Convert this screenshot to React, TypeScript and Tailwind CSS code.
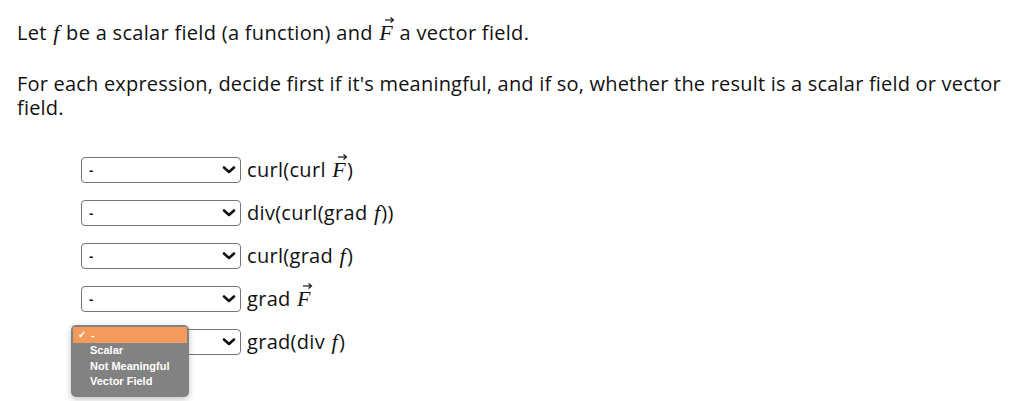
import React from "react";

const rows: { key: string; label: React.ReactNode; open?: boolean }[] = [
  { key: "a", label: <>curl(curl <Vec />)</> },
  { key: "b", label: <>div(curl(grad <Fn />))</> },
  { key: "c", label: <>curl(grad <Fn />)</> },
  { key: "d", label: <>grad <Vec /></> },
  { key: "e", label: <>grad(div <Fn />)</>, open: true },
];

function Fn() {
  return (
    <span className="italic text-[22px] px-[1px]" style={{ fontFamily: '"Liberation Serif", serif' }}>
      f
    </span>
  );
}

function Vec() {
  return (
    <span className="relative inline-block italic text-[22px] leading-none px-[1px]" style={{ fontFamily: '"Liberation Serif", serif' }}>
      F
      <svg className="absolute left-[6px] -top-[6px]" width="11" height="7" viewBox="0 0 11 7">
        <path d="M1 4 H9" stroke="#111" strokeWidth="1.2" />
        <path d="M6.5 1.5 L9.5 4 L6.5 6.5" stroke="#111" strokeWidth="1.2" fill="none" />
      </svg>
    </span>
  );
}

function FakeSelect({ open }: { open?: boolean }) {
  return (
    <div className="w-[160px] h-[26px] border border-[#767676] rounded-[4px] bg-white flex items-center justify-between pl-[7px] pr-[4px]">
      {/* the open menu covers the value, so it's left out */}
      <span className="text-[13px] font-bold leading-none" style={{ fontFamily: '"Liberation Sans", sans-serif' }}>
        {open ? "" : "-"}
      </span>
      <svg width="14" height="10" viewBox="0 0 14 10">
        <path d="M2 2.5 L7 7 L12 2.5" stroke="#111" strokeWidth="2.6" fill="none" strokeLinecap="round" strokeLinejoin="round" />
      </svg>
    </div>
  );
}

export default function App() {
  return (
    <div className="relative w-[1024px] h-[401px] bg-white text-[#111] overflow-hidden tracking-[0.3px]" style={{ fontFamily: '"Open Sans", sans-serif' }}>
      <div className="pl-[17px] pt-[21px] pr-[2px] text-[20px] leading-[24px]">
        <p>
          Let <Fn /> be a scalar field (a function) and <Vec /> a vector field.
        </p>
        <p className="mt-[27px] tracking-[0.2px]">
          For each expression, decide first if it's meaningful, and if so, whether the result is a scalar field or vector
          field.
        </p>
      </div>
      <div className="pl-[81px] pt-[37px] flex flex-col gap-[17px]">
        {rows.map((r) => (
          <div key={r.key} className="flex items-center gap-[6px] h-[26px]">
            <FakeSelect open={r.open} />
            <span className="text-[20px] leading-none">{r.label}</span>
          </div>
        ))}
      </div>
      <div
        className="absolute left-[71px] top-[325px] w-[118px] h-[72px] rounded-[5px] bg-[#828282] shadow-[0_2px_6px_rgba(0,0,0,0.25)] pt-[2px] text-white text-[11px] font-semibold tracking-normal"
        style={{ fontFamily: '"Liberation Sans", sans-serif' }}
      >
        <div className="bg-[#f49a5c] mx-[2px] h-[16px] leading-[16px] flex items-center pl-[5px] overflow-hidden">
          <span className="w-[13px] text-[10px] leading-[16px]">✓</span>
          <span className="leading-[16px]">-</span>
        </div>
        <div className="pl-[19px] leading-[15.5px]">Scalar</div>
        <div className="pl-[19px] leading-[15.5px]">Not Meaningful</div>
        <div className="pl-[19px] leading-[15.5px]">Vector Field</div>
      </div>
    </div>
  );
}
